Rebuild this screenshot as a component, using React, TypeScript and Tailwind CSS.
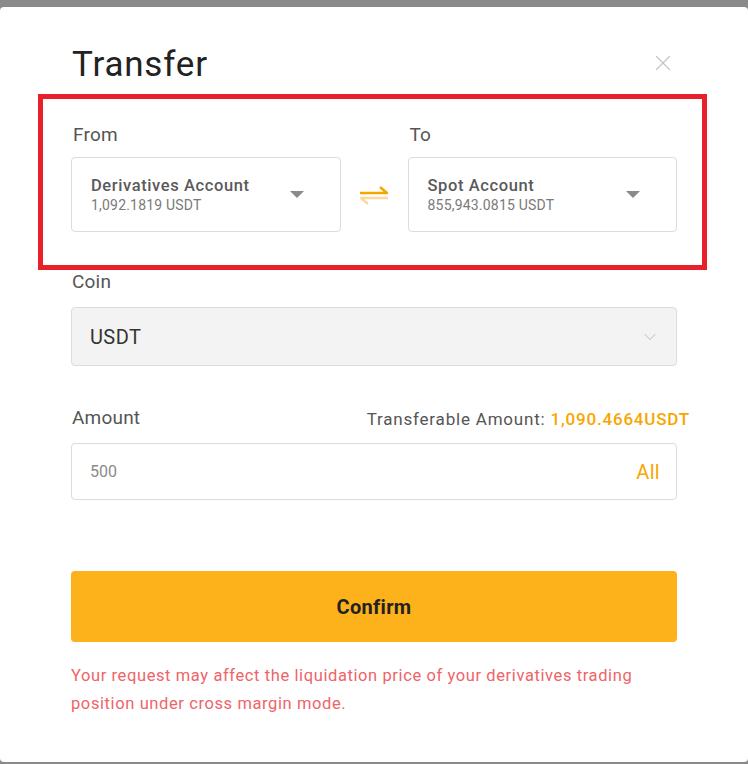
import { X, ChevronDown } from "lucide-react";

const FONT = "font-['Roboto','Liberation_Sans',sans-serif]";

function Caret() {
  return (
    <svg width="14" height="8" viewBox="0 0 14 8" className="shrink-0">
      <path d="M0 0 H14 L7 7 Z" fill="#8a8a8a" />
    </svg>
  );
}

function SwapIcon() {
  return (
    <svg width="30" height="22" viewBox="0 0 30 22">
      <path d="M1 9 H28 L21 3" fill="none" stroke="#f7a600" strokeWidth="2.5" strokeLinejoin="round" />
      <path d="M29 14 H2 L9 20" fill="none" stroke="#fcd9a0" strokeWidth="2.5" strokeLinejoin="round" />
    </svg>
  );
}

interface AccountSelectProps {
  label: string;
  name: string;
  balance: string;
}

function AccountSelect({ label, name, balance }: AccountSelectProps) {
  return (
    <div className="flex-1 min-w-0">
      <p className="text-[19px] leading-[24px] text-[#555] pl-[2px] tracking-[0.2px]">{label}</p>
      <div className="mt-[10px] h-[75px] border border-[#dcdcdc] rounded-[4px] flex items-center pl-[19px] pr-[36px]">
        <div className="flex-1 min-w-0">
          <p className="text-[16.5px] leading-[20px] font-medium text-[#5a5a5a] tracking-[0.6px]">{name}</p>
          <p className="text-[14px] leading-[18px] text-[#7a7a7a] tracking-[0.2px]">{balance}</p>
        </div>
        <Caret />
      </div>
    </div>
  );
}

export default function App() {
  return (
    <div className={`${FONT} bg-[#8a8a8a] h-[764px] pt-[7px] pb-[2px]`}>
      <div className="bg-white h-full rounded-[4px] px-[71px] pt-[38px]">
        <div className="flex items-center justify-between">
          <h1 className="text-[35px] leading-[40px] text-[#222] pl-px tracking-[0.8px]">Transfer</h1>
          <X size={26} strokeWidth={1.1} className="text-[#c4c4c4] mr-[1px] -mt-[4px]" />
        </div>

        <div className="relative mt-[38px]">
          <div className="pointer-events-none absolute -left-[33px] -right-[30px] -top-[29px] -bottom-[38px] border-[5px] border-[#e8202a]" />
          <div className="flex items-end gap-[18px]">
            <AccountSelect label="From" name="Derivatives Account" balance="1,092.1819 USDT" />
            <div className="h-[75px] flex items-center shrink-0 w-[31px] justify-center">
              <SwapIcon />
            </div>
            <AccountSelect label="To" name="Spot Account" balance="855,943.0815 USDT" />
          </div>
        </div>

        <p className="mt-[38px] text-[19px] leading-[24px] text-[#555] pl-px tracking-[0.2px]">Coin</p>
        <div className="mt-[13px] h-[59px] bg-[#f3f3f3] border border-[#dcdcdc] rounded-[4px] flex items-center justify-between pl-[18px] pr-[16px]">
          <span className="text-[20px] text-[#333] tracking-[0.4px]">USDT</span>
          <ChevronDown size={20} strokeWidth={1} className="text-[#b0b0b0]" />
        </div>

        <div className="mt-[40px] flex items-end justify-between">
          <span className="text-[19px] leading-[24px] text-[#555] pl-px tracking-[0.2px]">Amount</span>
          <span className="text-[17px] leading-[22px] text-[#555] tracking-[0.8px] -mr-[13px]">
            Transferable Amount: <span className="text-[#f7a600] font-medium">1,090.4664USDT</span>
          </span>
        </div>
        <div className="mt-[13px] h-[57px] border border-[#dcdcdc] rounded-[4px] flex items-center justify-between pl-[18px] pr-[16px]">
          <span className="text-[16px] text-[#8a8a8a]">500</span>
          <span className="text-[20px] text-[#f7a600] tracking-[0.3px]">All</span>
        </div>

        <button className="mt-[71px] w-full h-[71px] bg-[#fdb11b] rounded-[4px] text-[20px] font-bold text-[#222] tracking-[0.3px]">
          Confirm
        </button>

        <p className="mt-[20px] text-[16.5px] leading-[28px] text-[#ee6468] pr-[30px] tracking-[0.6px]">
          Your request may affect the liquidation price of your derivatives trading position under cross margin mode.
        </p>
      </div>
    </div>
  );
}
